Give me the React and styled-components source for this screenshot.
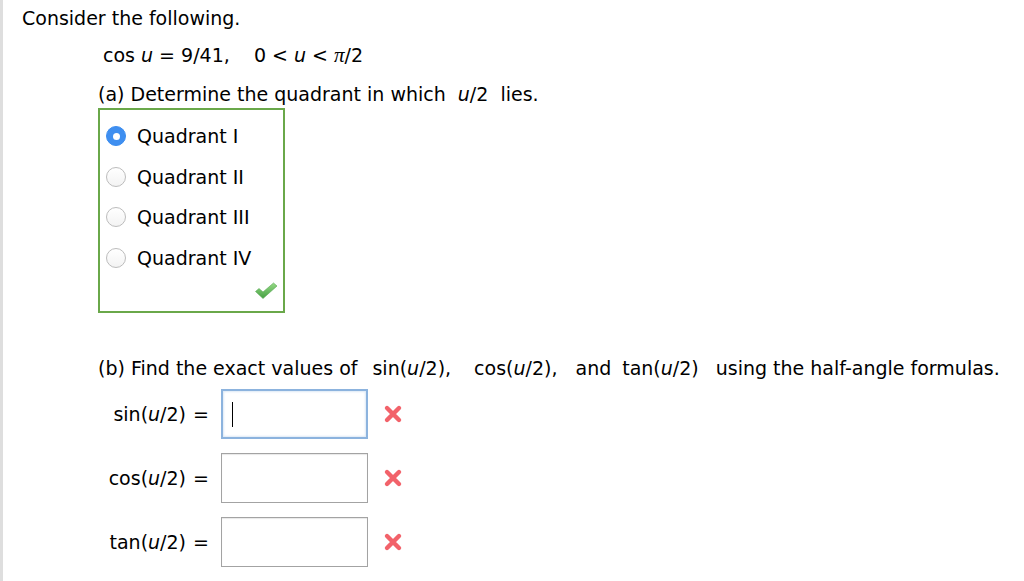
import React from 'react';
import styled, { createGlobalStyle } from 'styled-components';

const GlobalStyle = createGlobalStyle`
  html, body {
    margin: 0;
    padding: 0;
    background: #fff;
  }
  body {
    font-family: "DejaVu Sans", Verdana, sans-serif;
    color: #000;
  }
`;

const Page = styled.div`
  border-left: 3px solid #dedede;
  min-height: 581px;
  box-sizing: border-box;
  padding: 7px 0 0 19px;
  font-size: 19px;
  line-height: 22px;
`;

const Title = styled.div`
  margin: 0;
`;

const Indent = styled.div`
  padding-left: 76px;
`;

const Equation = styled.div`
  margin-top: 15px;
  padding-left: 5px;
  white-space: pre;
`;

const Question = styled.div`
  margin-top: ${(p) => p.$top}px;
  white-space: pre;
`;

// extra room between the pieces of a sentence
const Sp = styled.span`
  display: inline-block;
  width: ${(p) => p.$w}px;
`;

const Var = styled.i`
  font-style: italic;
`;

const Pi = styled.i`
  font-family: "Liberation Serif", serif;
  font-style: italic;
  font-size: 21px;
`;

const ChoiceBox = styled.div`
  margin-top: 3px;
  width: 187px;
  height: 205px;
  box-sizing: border-box;
  border: 2px solid #6aa84a;
  padding: 6px 0 0 6px;
  display: flex;
  flex-direction: column;
`;

const Option = styled.label`
  display: flex;
  align-items: center;
  height: 40.5px;
  gap: 11px;
`;

const Radio = styled.span`
  width: 20px;
  height: 20px;
  box-sizing: border-box;
  border-radius: 50%;
  display: flex;
  align-items: center;
  justify-content: center;
  border: 1px solid ${(p) => (p.$checked ? '#3a8df0' : '#bcbcbc')};
  background: ${(p) =>
    p.$checked ? '#3f8ff0' : 'linear-gradient(#ffffff, #f3f3f3)'};

  &::after {
    content: '';
    display: ${(p) => (p.$checked ? 'block' : 'none')};
    width: 7px;
    height: 7px;
    border-radius: 50%;
    background: #fff;
  }
`;

const CheckWrap = styled.div`
  margin-top: auto;
  align-self: flex-end;
  margin-right: 5px;
  margin-bottom: 11px;
  display: flex;
`;

const Rows = styled.div`
  margin-top: 10px;
  display: flex;
  flex-direction: column;
  gap: 14px;
`;

const Row = styled.div`
  display: grid;
  grid-template-columns: 88px 30px 5px 147px 50px;
  align-items: center;
  height: 50px;
`;

const FnLabel = styled.span`
  text-align: right;
  white-space: nowrap;
`;

const Eq = styled.span`
  text-align: center;
`;

const Input = styled.div`
  grid-column: 4;
  width: 147px;
  height: 50px;
  box-sizing: border-box;
  border: ${(p) => (p.$focused ? '2px solid #8cb3de' : '1px solid #a3a3a3')};
  box-shadow: ${(p) =>
    p.$focused ? 'inset 0 0 2px 1px #dde9f6' : 'inset 0 1px 1px #e8e8e8'};
  display: flex;
  align-items: center;
  padding-left: 9px;
`;

const Caret = styled.span`
  width: 1px;
  height: 25px;
  background: #000;
`;

const MarkWrap = styled.span`
  display: flex;
  justify-content: center;
`;

const CheckIcon = () => (
  <svg width="24" height="18" viewBox="0 0 24 18">
    <defs>
      <linearGradient id="chk" x1="0" y1="0" x2="0" y2="1">
        <stop offset="0" stopColor="#96da86" />
        <stop offset="1" stopColor="#45a042" />
      </linearGradient>
    </defs>
    <path
      d="M1.5 9.5 L5 6.5 L9 10 L19.5 1 L23 4 L9 16.5 Z"
      fill="url(#chk)"
      stroke="#55a850"
      strokeWidth="0.6"
      strokeLinejoin="round"
    />
  </svg>
);

const CrossIcon = () => (
  <svg width="20" height="20" viewBox="0 0 20 20">
    <path
      d="M4 4 L16 16 M16 4 L4 16"
      stroke="#f2626a"
      strokeWidth="4.4"
      strokeLinecap="round"
    />
  </svg>
);

const options = ['Quadrant I', 'Quadrant II', 'Quadrant III', 'Quadrant IV'];

const fns = ['sin', 'cos', 'tan'];

const App = () => {
  return (
    <>
      <GlobalStyle />
      <Page>
        <Title>Consider the following.</Title>
        <Indent>
          <Equation>
            cos <Var>u</Var> = 9/41,    0 &lt; <Var>u</Var> &lt; <Pi>π</Pi>/2
          </Equation>
          <Question $top={17}>
            (a) Determine the quadrant in which  <Var>u</Var>/2  lies.
          </Question>
          <ChoiceBox>
            {options.map((o, i) => (
              <Option key={o}>
                <Radio $checked={i === 0} />
                {o}
              </Option>
            ))}
            <CheckWrap>
              <CheckIcon />
            </CheckWrap>
          </ChoiceBox>
          <Question $top={44}>
            (b) Find the exact values of<Sp $w={15} />sin(<Var>u</Var>/2),<Sp $w={23} />cos(<Var>u</Var>/2),<Sp $w={18} />and<Sp $w={11} />tan(<Var>u</Var>/2)<Sp $w={17} />using the half-angle formulas.
          </Question>
        </Indent>
        <Indent>
          <Rows>
            {fns.map((f, i) => (
              <Row key={f}>
                <FnLabel>
                  {f}(<Var>u</Var>/2)
                </FnLabel>
                <Eq>=</Eq>
                <Input $focused={i === 0}>{i === 0 && <Caret />}</Input>
                <MarkWrap>
                  <CrossIcon />
                </MarkWrap>
              </Row>
            ))}
          </Rows>
        </Indent>
      </Page>
    </>
  );
};

export default App;
